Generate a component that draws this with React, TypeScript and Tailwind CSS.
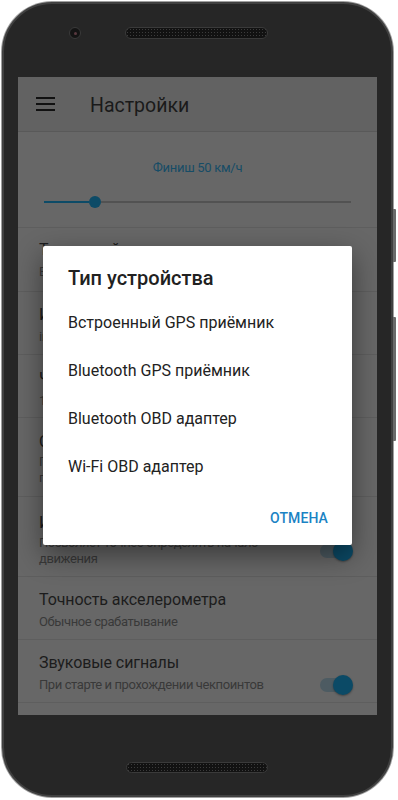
import React from "react";

function Switch() {
  return (
    <div className="flex items-center shrink-0">
      <div className="w-[30px] h-[14px] rounded-full bg-[#4d5b62]" />
      <div className="w-[20px] h-[20px] -ml-[17px] rounded-full bg-[#0b4a66] shadow-[0_1px_2px_rgba(0,0,0,0.35)]" />
    </div>
  );
}

type Item = {
  title: string;
  sub: React.ReactNode;
  h: string;
  pt: string;
  multi?: boolean;
  toggle?: boolean;
};

const items: Item[] = [
  { title: "Тип устройства", sub: "Встроенный GPS приёмник", h: "h-[64px]", pt: "pt-[12px]" },
  { title: "Источник данных", sub: "internal", h: "h-[63px]", pt: "pt-[13px]" },
  { title: "Частота обновления", sub: "1 Гц", h: "h-[63px]", pt: "pt-[14px]" },
  {
    title: "Скорость поверх окон",
    sub: (
      <>
        Показывать текущую скорость
        <br />
        поверх других приложений
      </>
    ),
    h: "h-[79px]",
    pt: "pt-[14px]",
    multi: true,
  },
  {
    title: "Использовать акселерометр",
    sub: (
      <>
        Позволяет точнее определять начало
        <br />
        движения
      </>
    ),
    h: "h-[80px]",
    pt: "pt-[16px]",
    multi: true,
    toggle: true,
  },
  { title: "Точность акселерометра", sub: "Обычное срабатывание", h: "h-[63px]", pt: "pt-[13px]" },
  {
    title: "Звуковые сигналы",
    sub: "При старте и прохождении чекпоинтов",
    h: "h-[63px]",
    pt: "pt-[13px]",
    toggle: true,
  },
];

const dialogOptions = [
  "Встроенный GPS приёмник",
  "Bluetooth GPS приёмник",
  "Bluetooth OBD адаптер",
  "Wi-Fi OBD адаптер",
];

export default function App() {
  return (
    <div className="w-[398px] h-[800px] bg-white overflow-hidden pt-[2px] pl-[2px] font-['Roboto',sans-serif]">
      {/* phone */}
      <div className="relative w-[391px] h-[795px] rounded-[50px] bg-[#262626] border-2 border-[#404040] shadow-[0_0_0_1px_#a0a0a0] flex flex-col">
        {/* side buttons */}
        <div className="absolute -right-[5px] top-[205px] w-[3px] h-[53px] bg-[#6a6a6a] rounded-r-[1px]" />
        <div className="absolute -right-[5px] top-[313px] w-[3px] h-[124px] bg-[#6a6a6a] rounded-r-[1px]" />

        {/* top bezel */}
        <div className="h-[73px] shrink-0 pt-[23px] pl-[65px] flex items-start">
          <div className="w-[12px] h-[12px] rounded-full bg-[#141414] border border-[#3a3a3a] flex items-center justify-center">
            <div className="w-[3px] h-[3px] rounded-full bg-[#5a3a40]" />
          </div>
          <div className="ml-[44px] w-[143px] h-[12px] rounded-full border border-[#3a3a3a] bg-[#121212] bg-[radial-gradient(circle,#3c3c3c_0.7px,transparent_0.9px)] bg-[length:3px_3px]" />
        </div>

        {/* screen */}
        <div className="mx-[14px] h-[638px] shrink-0 bg-[#676767] relative overflow-hidden flex flex-col">
          {/* app bar */}
          <div className="h-[55px] shrink-0 bg-[#626262] border-b border-[#595959] flex items-center pl-[18px]">
            <div className="flex flex-col gap-[4px] w-[19px]">
              <div className="h-[2px] bg-[#111111]" />
              <div className="h-[2px] bg-[#111111]" />
              <div className="h-[2px] bg-[#111111]" />
            </div>
            <div className="ml-[35px] pt-[4px] text-[19.5px] leading-[24px] text-[#1a1a1a]">Настройки</div>
          </div>

          {/* slider section */}
          <div className="h-[96px] shrink-0 border-b border-[#5e5e5e] pt-[26px] flex flex-col">
            <div className="text-center text-[13px] tracking-[-0.3px] leading-[20px] text-[#164c66]">Финиш 50 км/ч</div>
            <div className="mt-[18px] mx-[26px] h-[12px] flex items-center">
              <div className="w-[45px] h-[2px] bg-[#0d4b67]" />
              <div className="w-[12px] h-[12px] rounded-full bg-[#0d4b67]" />
              <div className="flex-1 h-[2px] bg-[#525252]" />
            </div>
          </div>

          {/* items */}
          {items.map((it, i) => (
            <div
              key={i}
              className={`${it.h} ${it.pt} shrink-0 border-b border-[#5e5e5e] pl-[21px] pr-[24px] flex flex-col`}
            >
              <div className="text-[16px] tracking-[-0.1px] leading-[20px] text-[#1c1c1c] whitespace-nowrap">{it.title}</div>
              <div className="mt-[2px] flex items-center">
                <div
                  className={`flex-1 text-[13px] tracking-[-0.4px] ${it.multi ? "leading-[16px]" : "leading-[20px]"} text-[#393939] whitespace-nowrap`}
                >
                  {it.sub}
                </div>
                {it.toggle && <Switch />}
              </div>
            </div>
          ))}

          {/* dialog */}
          <div className="absolute left-[25px] top-[169px] w-[309px] h-[299px] bg-white rounded-[2px] shadow-[0_10px_28px_rgba(0,0,0,0.45)] pt-[20px] flex flex-col">
            <div className="pl-[25px] text-[20px] leading-[24px] font-medium text-[#212121]">Тип устройства</div>
            <div className="mt-[9px] flex flex-col">
              {dialogOptions.map((o) => (
                <div key={o} className="h-[48px] pl-[25px] flex items-center text-[16px] text-[#222222]">
                  {o}
                </div>
              ))}
            </div>
            <div className="mt-[9px] h-[36px] pr-[24px] flex items-center justify-end">
              <div className="text-[14px] font-medium tracking-[0.1px] text-[#1b83c4]">ОТМЕНА</div>
            </div>
          </div>
        </div>

        {/* bottom bezel */}
        <div className="flex-1 flex justify-center pt-[47px]">
          <div className="ml-[-2px] w-[142px] h-[11px] rounded-full border border-[#3a3a3a] bg-[#121212] bg-[radial-gradient(circle,#3c3c3c_0.7px,transparent_0.9px)] bg-[length:3px_3px]" />
        </div>
      </div>
    </div>
  );
}
